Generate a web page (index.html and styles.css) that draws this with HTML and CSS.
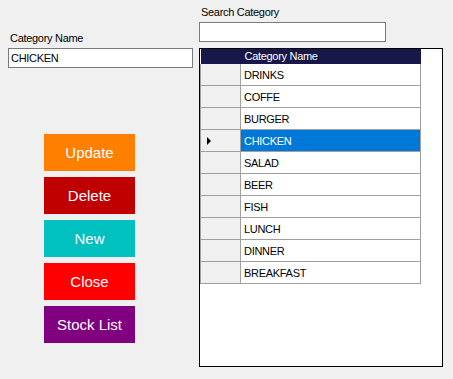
FILE: index.html
```html
<!DOCTYPE html>
<html>
<head>
  <meta charset="utf-8">
  <title>Category</title>
  <link rel="stylesheet" href="styles.css">
</head>
<body>
  <div class="form">
    <div class="left">
      <div class="label">Category Name</div>
      <div class="textbox name-box">CHICKEN</div>
      <div class="buttons">
        <div class="btn update">Update</div>
        <div class="btn delete">Delete</div>
        <div class="btn new">New</div>
        <div class="btn close">Close</div>
        <div class="btn stock">Stock List</div>
      </div>
    </div>

    <div class="right">
      <div class="label">Search Category</div>
      <div class="textbox search-box"></div>
      <div class="grid">
        <table>
          <tr class="head">
            <td class="rowhead"></td>
            <td>Category Name</td>
          </tr>
          <tr><td class="rowhead"></td><td>DRINKS</td></tr>
          <tr><td class="rowhead"></td><td>COFFE</td></tr>
          <tr><td class="rowhead"></td><td>BURGER</td></tr>
          <tr class="selected"><td class="rowhead"><span class="arrow"></span></td><td>CHICKEN</td></tr>
          <tr><td class="rowhead"></td><td>SALAD</td></tr>
          <tr><td class="rowhead"></td><td>BEER</td></tr>
          <tr><td class="rowhead"></td><td>FISH</td></tr>
          <tr><td class="rowhead"></td><td>LUNCH</td></tr>
          <tr><td class="rowhead"></td><td>DINNER</td></tr>
          <tr><td class="rowhead"></td><td>BREAKFAST</td></tr>
        </table>
      </div>
    </div>
  </div>
</body>
</html>
```

FILE: styles.css
```css
body {
  margin: 0;
  background-color: #f0f0f0;
  font-family: "Liberation Sans", Arial, sans-serif;
  font-size: 11px;
  color: #000;
}
.form {
  display: flex;
}
.left {
  width: 185px;
  padding-left: 8px;
  padding-top: 32px;
}
.right {
  margin-left: 6px;
  padding-top: 6px;
}
.label {
  height: 13px;
  line-height: 13px;
  padding-left: 2px;
  letter-spacing: -0.3px;
}
.textbox {
  box-sizing: border-box;
  background-color: #fff;
  border: 1px solid #7a7a7a;
  letter-spacing: -0.3px;
}
.name-box {
  width: 185px;
  height: 20px;
  margin-top: 3px;
  padding-left: 2px;
  line-height: 18px;
}
.search-box {
  width: 187px;
  height: 20px;
  margin-top: 3px;
}
.buttons {
  display: flex;
  flex-direction: column;
  gap: 6px;
  margin-top: 66px;
  margin-left: 36px;
}
.btn {
  width: 91px;
  height: 37px;
  line-height: 37px;
  text-align: center;
  color: #fff;
  font-size: 15px;
}
.update { background-color: #ff8000; }
.delete { background-color: #c00000; }
.new { background-color: #00c0c0; }
.close { background-color: #ff0000; }
.stock { background-color: #800080; }

.grid {
  box-sizing: border-box;
  width: 244px;
  height: 319px;
  margin-top: 6px;
  border: 1px solid #000;
  background-color: #fff;
}
table {
  border-collapse: collapse;
  width: 221px;
}
td {
  padding: 0 0 0 3px;
  height: 21px;
  border-bottom: 1px solid #a0a0a0;
  border-right: 1px solid #a0a0a0;
  letter-spacing: -0.3px;
  white-space: nowrap;
}
td.rowhead {
  width: 36px;
  background-color: #f0f0f0;
  border-left: 1px solid #a0a0a0;
  position: relative;
}
.head td {
  height: 15px;
  line-height: 15px;
  background-color: #17174a;
  color: #fff;
  border: none;
  padding-left: 4px;
}
.selected td:last-child {
  background-color: #0078d7;
  color: #fff;
}
.arrow {
  position: absolute;
  left: 6px;
  top: 7px;
  width: 0;
  height: 0;
  border-top: 4px solid transparent;
  border-bottom: 4px solid transparent;
  border-left: 4px solid #000;
}
```
